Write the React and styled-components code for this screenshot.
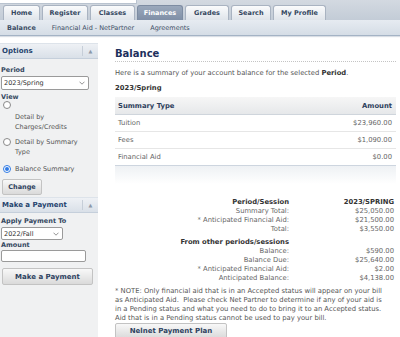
import React from "react";
import styled, { createGlobalStyle } from "styled-components";

const Global = createGlobalStyle`
  html, body { margin: 0; padding: 0; background: #fff; }
  body { font-family: "DejaVu Sans", Verdana, sans-serif; font-size: 6.5px; color: #555; }
  * { box-sizing: border-box; }
`;

const Page = styled.div`
  width: 400px;
  height: 337px;
  overflow: hidden;
  display: flex;
  flex-direction: column;
`;

const Header = styled.div`
  flex: none;
  background: linear-gradient(#d3d9e1, #c3ccd7);
  display: flex;
  flex-direction: column;
`;

const TopStrip = styled.div`
  width: 137px;
  height: 4px;
  background: #fff;
  border-bottom: 1px solid #b9c3cf;
  border-right: 1px solid #b9c3cf;
`;

const TabBar = styled.div`
  display: flex;
  gap: 2px;
  padding: 0 0 0 3px;
  height: 16px;
  align-items: flex-end;
`;

const Tab = styled.div`
  width: ${(p) => p.$w}px;
  height: 15px;
  display: flex;
  align-items: center;
  justify-content: center;
  font-weight: bold;
  font-size: 6.5px;
  border: 1px solid ${(p) => (p.$active ? "#7d8ca2" : "#a9b3c1")};
  border-bottom: none;
  border-radius: 3px 3px 0 0;
  color: ${(p) => (p.$active ? "#fff" : "#34475f")};
  background: ${(p) =>
    p.$active
      ? "linear-gradient(#9aa8bb, #7f8fa6)"
      : "linear-gradient(#fafbfc, #dfe4ea)"};
`;

const SubNav = styled.div`
  flex: none;
  height: 16px;
  display: flex;
  align-items: center;
  padding-left: 7px;
  gap: 16px;
  background: linear-gradient(#e6ebf1, #d5dde6);
  border-bottom: 1px solid #a4b3c5;
  box-shadow: 0 1px 1px #d9dee5;
`;

const SubLink = styled.span`
  font-size: 6.5px;
  color: #3d4e66;
  font-weight: ${(p) => (p.$active ? "bold" : "normal")};
`;

const Body = styled.div`
  flex: 1;
  min-height: 0;
  display: flex;
  margin-top: 7px;
`;

const Sidebar = styled.div`
  width: 98px;
  flex: none;
  background: #f0f1f2;
  display: flex;
  flex-direction: column;
`;

const PanelHeader = styled.div`
  height: 16px;
  flex: none;
  display: flex;
  align-items: center;
  padding-left: 2px;
  background: linear-gradient(#eef1f5, #d9e0e8);
  border-top: 1px solid #dde3ea;
  border-bottom: 1px solid #c5cfdb;
  font-weight: bold;
  font-size: 7px;
  color: #26446e;
`;

const HeaderTitle = styled.span`
  flex: 1;
`;

const Toggle = styled.span`
  width: 16px;
  height: 10px;
  border-left: 1px solid #c6ced8;
  display: flex;
  align-items: center;
  justify-content: center;
  font-size: 5px;
  color: #8c98a8;
`;

const PanelBody = styled.div`
  padding: ${(p) => p.$pt}px 2px ${(p) => p.$pb}px 1px;
  display: flex;
  flex-direction: column;
`;

const FieldLabel = styled.div`
  font-weight: bold;
  font-size: 6.5px;
  color: #34475f;
  margin: ${(p) => p.$m || "0"};
`;

const SelectBox = styled.div`
  width: ${(p) => p.$w}px;
  height: ${(p) => p.$h}px;
  border: 1px solid #9a9a9a;
  border-radius: 2px;
  background: #fff;
  display: flex;
  align-items: center;
  justify-content: space-between;
  padding: 0 3px 0 2px;
  font-size: 6.5px;
  color: #333;
  margin-top: 2px;
`;

const TextInput = styled.input`
  width: 85px;
  height: 12px;
  border: 1px solid #9a9a9a;
  border-radius: 2px;
  background: #fff;
  margin: 1px 0 0;
  padding: 0;
`;

const RadioRow = styled.div`
  display: flex;
  flex-direction: ${(p) => (p.$stacked ? "column" : "row")};
  align-items: flex-start;
  margin-top: ${(p) => p.$mt || 0}px;
  font-size: 6.5px;
  color: #555;
  line-height: 10px;
`;

const Radio = styled.span`
  width: 8px;
  height: 8px;
  border-radius: 50%;
  border: 1px solid ${(p) => (p.$checked ? "#2f7ae5" : "#8a8a8a")};
  background: #fff;
  flex: none;
  margin: 1px 4px 0 2px;
  display: flex;
  align-items: center;
  justify-content: center;
  &::after {
    content: "";
    width: 4px;
    height: 4px;
    border-radius: 50%;
    background: ${(p) => (p.$checked ? "#2f7ae5" : "transparent")};
  }
`;

const RadioText = styled.span`
  padding-left: ${(p) => (p.$indent ? 14 : 0)}px;
  margin-top: ${(p) => (p.$indent ? 3 : 0)}px;
`;

const Button = styled.div`
  display: inline-flex;
  align-items: center;
  justify-content: center;
  flex: none;
  width: ${(p) => p.$w}px;
  height: ${(p) => p.$h || 16}px;
  border: 1px solid #c3c3c3;
  border-radius: 2px;
  background: linear-gradient(#f8f8f8, #dadada);
  font-weight: bold;
  font-size: ${(p) => p.$fs || 6.5}px;
  color: #2e4260;
  margin: ${(p) => p.$m || "0"};
`;

const Main = styled.div`
  flex: 1;
  min-width: 0;
  padding: 5px 4px 0 17px;
  display: flex;
  flex-direction: column;
  font-size: 6.8px;
`;

const Title = styled.div`
  font-weight: bold;
  font-size: 10px;
  color: #1d305c;
  padding-bottom: 2px;
  border-bottom: 1px dotted #c4c4c4;
`;

const Intro = styled.div`
  margin-top: 7px;
  color: #555;
  b { color: #333; }
`;

const PeriodTitle = styled.div`
  margin-top: 7px;
  font-weight: bold;
  color: #333;
`;

const Table = styled.div`
  margin-top: 5px;
  display: flex;
  flex-direction: column;
`;

const TRow = styled.div`
  height: ${(p) => (p.$head ? 18 : 17)}px;
  display: flex;
  align-items: center;
  justify-content: space-between;
  padding: 0 4px 0 3px;
  color: ${(p) => (p.$head ? "#2d3f5c" : "#666")};
  font-weight: ${(p) => (p.$head ? "bold" : "normal")};
  background: ${(p) => (p.$head ? "linear-gradient(#f6f6f6, #e6e8ea)" : "#fff")};
  border-bottom: 1px solid ${(p) => (p.$head ? "#cfd5dc" : "#e6e6e6")};
  &:last-child { border-bottom: 1px solid #cdd5df; }
`;

const Fade = styled.div`
  height: 18px;
  flex: none;
  background: linear-gradient(#eef1f4, #fff);
`;

const Summary = styled.div`
  margin-top: 14px;
  display: grid;
  grid-template-columns: 174px 1fr;
  padding-right: 2px;
  line-height: 9px;
  color: #666;
`;

const SumLabel = styled.div`
  text-align: right;
  font-weight: ${(p) => (p.$bold ? "bold" : "normal")};
  color: ${(p) => (p.$bold ? "#333" : "#666")};
  margin-top: ${(p) => p.$mt || 0}px;
`;

const SumValue = styled(SumLabel)``;

const Note = styled.div`
  margin-top: 4px;
  line-height: 9px;
  color: #555;
  white-space: nowrap;
`;

const Chevron = () => (
  <svg width="6" height="4" viewBox="0 0 6 4">
    <path d="M0.5 0.7 L3 3.2 L5.5 0.7" fill="none" stroke="#777" strokeWidth="0.8" />
  </svg>
);

export default function App() {
  const tabs = [
    ["Home", 37],
    ["Register", 46],
    ["Classes", 45],
    ["Finances", 46, true],
    ["Grades", 44],
    ["Search", 40],
    ["My Profile", 53],
  ];
  const rows = [
    ["Tuition", "$23,960.00"],
    ["Fees", "$1,090.00"],
    ["Financial Aid", "$0.00"],
  ];
  const sum = [
    ["Period/Session", "2023/SPRING", true, 0],
    ["Summary Total:", "$25,050.00"],
    ["* Anticipated Financial Aid:", "$21,500.00"],
    ["Total:", "$3,550.00"],
    ["From other periods/sessions", "", true, 4],
    ["Balance:", "$590.00"],
    ["Balance Due:", "$25,640.00"],
    ["* Anticipated Financial Aid:", "$2.00"],
    ["Anticipated Balance:", "$4,138.00"],
  ];
  return (
    <Page>
      <Global />
      <Header>
        <TopStrip />
        <TabBar>
          {tabs.map(([t, w, a]) => (
            <Tab key={t} $w={w} $active={a}>
              {t}
            </Tab>
          ))}
        </TabBar>
      </Header>
      <SubNav>
        <SubLink $active>Balance</SubLink>
        <SubLink>Financial Aid - NetPartner</SubLink>
        <SubLink>Agreements</SubLink>
      </SubNav>
      <Body>
        <Sidebar>
          <PanelHeader>
            <HeaderTitle>Options</HeaderTitle>
            <Toggle>▲</Toggle>
          </PanelHeader>
          <PanelBody $pt={7} $pb={2}>
            <FieldLabel>Period</FieldLabel>
            <SelectBox $w={88} $h={14}>
              <span>2023/Spring</span>
              <Chevron />
            </SelectBox>
            <FieldLabel $m="3px 0 0">View</FieldLabel>
            <RadioRow $stacked $mt={-1}>
              <Radio />
              <RadioText $indent>
                Detail by
                <br />
                Charges/Credits
              </RadioText>
            </RadioRow>
            <RadioRow $mt={5}>
              <Radio />
              <span>
                Detail by Summary
                <br />
                Type
              </span>
            </RadioRow>
            <RadioRow $mt={7}>
              <Radio $checked />
              <span>Balance Summary</span>
            </RadioRow>
            <Button $w={40} $m="5px 0 0 1px">Change</Button>
          </PanelBody>
          <PanelHeader>
            <HeaderTitle>Make a Payment</HeaderTitle>
            <Toggle>▲</Toggle>
          </PanelHeader>
          <PanelBody $pt={4} $pb={4}>
            <FieldLabel>Apply Payment To</FieldLabel>
            <SelectBox $w={62} $h={13}>
              <span>2022/Fall</span>
              <Chevron />
            </SelectBox>
            <FieldLabel $m="1px 0 0">Amount</FieldLabel>
            <TextInput />
            <Button $w={91} $h={17} $fs={7} $m="6px 0 0 1px">Make a Payment</Button>
          </PanelBody>
        </Sidebar>
        <Main>
          <Title>Balance</Title>
          <Intro>
            Here is a summary of your account balance for the selected <b>Period</b>.
          </Intro>
          <PeriodTitle>2023/Spring</PeriodTitle>
          <Table>
            <TRow $head>
              <span>Summary Type</span>
              <span>Amount</span>
            </TRow>
            {rows.map(([a, b]) => (
              <TRow key={a}>
                <span>{a}</span>
                <span>{b}</span>
              </TRow>
            ))}
          </Table>
          <Fade />
          <Summary>
            {sum.map(([l, v, bold, mt]) => (
              <React.Fragment key={l + v}>
                <SumLabel $bold={bold} $mt={mt}>{l}</SumLabel>
                <SumValue $bold={bold} $mt={mt}>{v}</SumValue>
              </React.Fragment>
            ))}
          </Summary>
          <Note>
            * NOTE: Only financial aid that is in an Accepted status will appear on your bill
            <br />
            as Anticipated Aid.&nbsp; Please check Net Partner to determine if any of your aid is
            <br />
            in a Pending status and what you need to do to bring it to an Accepted status.
            <br />
            Aid that is in a Pending status cannot be used to pay your bill.
          </Note>
          <Button $w={112} $h={16} $fs={7} $m="0">Nelnet Payment Plan</Button>
        </Main>
      </Body>
    </Page>
  );
}
